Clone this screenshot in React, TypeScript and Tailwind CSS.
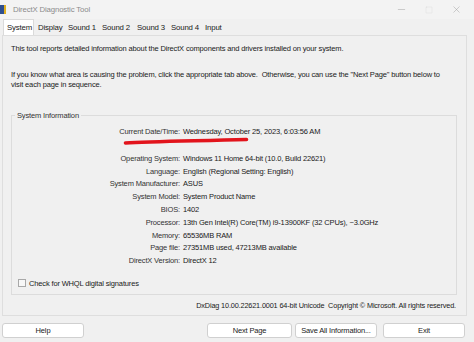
import { Minus, Square, X } from "lucide-react";

const TABS: [string, string][] = [
  ["System", "w-[31px]"],
  ["Display", "w-[30px]"],
  ["Sound 1", "w-[34px]"],
  ["Sound 2", "w-[35px]"],
  ["Sound 3", "w-[34px]"],
  ["Sound 4", "w-[34px]"],
  ["Input", "w-[28px]"],
];

const ROWS: [string, string][] = [
  ["Operating System:", "Windows 11 Home 64-bit (10.0, Build 22621)"],
  ["Language:", "English (Regional Setting: English)"],
  ["System Manufacturer:", "ASUS"],
  ["System Model:", "System Product Name"],
  ["BIOS:", "1402"],
  ["Processor:", "13th Gen Intel(R) Core(TM) i9-13900KF (32 CPUs), ~3.0GHz"],
  ["Memory:", "65536MB RAM"],
  ["Page file:", "27351MB used, 47213MB available"],
  ["DirectX Version:", "DirectX 12"],
];

const Button = ({ label, className = "" }: { label: string; className?: string }) => (
  <div
    className={`h-[15px] flex items-center justify-center bg-white border border-[#d0d0d0] rounded-[3px] text-[7.5px] text-[#1a1a1a] ${className}`}
  >
    {label}
  </div>
);

const App = () => {
  return (
    <div className="w-[474px] h-[342px] overflow-hidden bg-[#f0f0f0] font-['Liberation_Sans',Tahoma,sans-serif] tracking-[-0.15px] text-[#1a1a1a] flex flex-col">
      {/* title bar */}
      <div className="h-[19px] flex items-center bg-[#f3f3f3] shrink-0">
        <div className="w-[6px] h-[9px] bg-[#2f4f8f] border-r-2 border-[#e0b020]" />
        <span className="ml-[7px] text-[7.8px] text-[#8c8c8c]">DirectX Diagnostic Tool</span>
        <div className="ml-auto flex items-center gap-[18px] pr-[12px] text-[#9a9a9a]">
          <Minus size={11} strokeWidth={1} />
          <Square size={8} strokeWidth={1} className="text-[#d4d4d4]" />
          <X size={11} strokeWidth={1} />
        </div>
      </div>

      {/* tabs */}
      <div className="h-[16px] flex items-end pl-[3px] shrink-0 text-[7.8px]">
        {TABS.map(([t, w], i) => (
          <div
            key={t}
            className={
              i === 0
                ? `${w} h-[16px] pl-[3px] flex items-center bg-white border border-b-0 border-[#dadada]`
                : `${w} h-[14px] pl-[4px] flex items-center`
            }
          >
            {t}
          </div>
        ))}
      </div>

      {/* panel */}
      <div className="mx-[2px] w-[465px] h-[281px] border border-[#dedede] bg-[#f0f0f0] flex flex-col shrink-0 text-[7.5px]">
        <div className="pl-[8px] pt-[8px] leading-[10px]">
          This tool reports detailed information about the DirectX components and drivers installed on your system.
        </div>
        <div className="w-[447px] pl-[8px] pt-[16px] leading-[10px]">
          If you know what area is causing the problem, click the appropriate tab above.&nbsp; Otherwise, you can use
          the "Next Page" button below to visit each page in sequence.
        </div>

        {/* group box */}
        <div className="relative ml-[8px] mr-[9px] mt-[25px] h-[180px] border border-[#dcdcdc] flex flex-col">
          <span className="absolute -top-[6px] left-[3px] px-[2px] bg-[#f0f0f0] text-[#333] leading-[11px]">
            System Information
          </span>

          <div className="mt-[10px] flex leading-[12px]">
            <div className="w-[168px] text-right text-[#333]">Current Date/Time:</div>
            <div className="pl-[3px]">Wednesday, October 25, 2023, 6:03:56 AM</div>
          </div>

          <div className="relative h-[14px]">
            <svg className="absolute left-[111px] -top-[1px]" width="126" height="9" viewBox="0 0 126 9">
              <path
                d="M2.5 6 C 25 4.5, 70 4, 123.5 2.5"
                stroke="#e2141c"
                strokeWidth="3.6"
                strokeLinecap="round"
                fill="none"
              />
            </svg>
          </div>

          <div className="flex flex-col">
            {ROWS.map(([label, value]) => (
              <div key={label} className="flex h-[12.8px] items-center">
                <div className="w-[168px] text-right text-[#333]">{label}</div>
                <div className="pl-[3px]">{value}</div>
              </div>
            ))}
          </div>

          <div className="mt-auto mb-[5px] ml-[6px] flex items-center gap-[3px]">
            <div className="w-[8px] h-[8px] border border-[#a8a8a8] bg-[#f7f7f7]" />
            <span>Check for WHQL digital signatures</span>
          </div>
        </div>

        <div className="mt-[6px] mr-[10px] text-right text-[7.3px]">
          DxDiag 10.00.22621.0001 64-bit Unicode&nbsp; Copyright © Microsoft. All rights reserved.
        </div>
      </div>

      {/* buttons */}
      <div className="mt-[7px] flex items-center">
        <Button label="Help" className="ml-[2px] w-[82px]" />
        <Button label="Next Page" className="ml-[123px] w-[85px]" />
        <Button label="Save All Information..." className="ml-[3px] w-[82px]" />
        <Button label="Exit" className="ml-[6px] w-[82px]" />
      </div>
    </div>
  );
};

export default App;
